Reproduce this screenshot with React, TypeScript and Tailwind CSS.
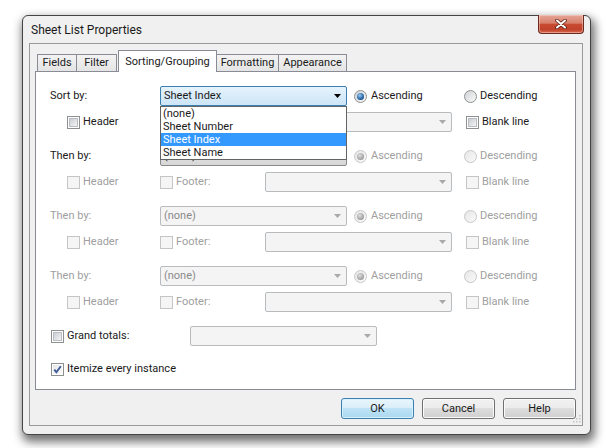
import React from 'react'

function Check({ checked = false, disabled = false }: { checked?: boolean; disabled?: boolean }) {
  if (disabled) {
    return <span className="h-[13px] w-[13px] shrink-0 border border-[#c5c5c5] bg-[#f5f5f5]" />
  }
  return (
    <span className="flex h-[13px] w-[13px] shrink-0 items-center justify-center border border-[#8e8f8f] bg-white">
      <span
        className={
          checked
            ? 'flex h-[9px] w-[9px] items-center justify-center bg-[linear-gradient(135deg,#e4e7eb,#fbfbfb)]'
            : 'h-[9px] w-[9px] border border-[#b9bdc3] bg-[linear-gradient(135deg,#c9cdd3,#f4f4f4)]'
        }
      >
        {checked && (
          <svg width="9" height="9" viewBox="0 0 9 9">
            <path d="M1.3 4.6 L3.4 7.2 L7.8 1.2" fill="none" stroke="#3d5a96" strokeWidth="1.9" />
          </svg>
        )}
      </span>
    </span>
  )
}

function Radio({ selected = false, disabled = false }: { selected?: boolean; disabled?: boolean }) {
  const ring = disabled
    ? 'flex h-[13px] w-[13px] shrink-0 items-center justify-center rounded-full border border-[#c7c7c7] bg-[linear-gradient(135deg,#e6e6e6,#fafafa)]'
    : 'flex h-[13px] w-[13px] shrink-0 items-center justify-center rounded-full border border-[#8e8f8f] bg-[linear-gradient(135deg,#cfd2d6,#fafafa)]'
  return (
    <span className={ring}>
      {selected && (
        <span
          className={
            disabled
              ? 'h-[7px] w-[7px] rounded-full bg-[radial-gradient(circle_at_40%_35%,#e0e0e0,#a5a5a5_60%,#8c8c8c)]'
              : 'h-[7px] w-[7px] rounded-full bg-[radial-gradient(circle_at_40%_35%,#9ccbf2,#2a6aa8_55%,#0d2b52)]'
          }
        />
      )}
    </span>
  )
}

function Arrow({ disabled = false }: { disabled?: boolean }) {
  return (
    <svg width="7" height="4" viewBox="0 0 7 4" className="shrink-0">
      <polygon points="0,0 7,0 3.5,4" fill={disabled ? '#a9a9a9' : '#000'} />
    </svg>
  )
}

function Combo({
  width,
  text,
  kind,
  children,
}: {
  width: string
  text?: string
  kind: 'active' | 'plain' | 'disabled'
  children?: React.ReactNode
}) {
  const look =
    kind === 'active'
      ? 'border-[#3c7fb1] bg-[linear-gradient(#e6f3fc,#cce5f7)]'
      : kind === 'plain'
        ? 'border-[#8a8a8a] bg-[linear-gradient(#f3f3f3,#ececec_50%,#e0e0e0_50%,#d6d6d6)]'
        : 'border-[#b8bcbf] bg-[#f4f4f4]'
  return (
    <div className={`relative ${width}`}>
      <div className={`flex h-[20px] items-center justify-between rounded-[2px] border pl-[3px] pr-[5px] ${look}`}>
        <span className={kind === 'disabled' ? 'text-[#8a8a8a]' : ''}>{text}</span>
        <Arrow disabled={kind === 'disabled'} />
      </div>
      {children}
    </div>
  )
}

function SortSection({ first = false, labelOn = false }: { first?: boolean; labelOn?: boolean }) {
  const grey = 'text-[#a0a0a0]'
  return (
    <div className="mb-[14px]">
      <div className="flex h-[20px] items-center">
        <span className={`w-[110px] ${first || labelOn ? '' : grey}`}>{first ? 'Sort by:' : 'Then by:'}</span>
        {first ? (
          <Combo width="w-[187px]" text="Sheet Index" kind="active">
            <div className="absolute left-0 top-full z-20 w-full border border-[#646464] bg-white">
              {['(none)', 'Sheet Number', 'Sheet Index', 'Sheet Name'].map((item) => (
                <div
                  key={item}
                  className={
                    item === 'Sheet Index'
                      ? 'h-[13px] bg-[#3399ff] pl-[2px] leading-[13px] text-white'
                      : 'h-[13px] pl-[2px] leading-[13px]'
                  }
                >
                  {item}
                </div>
              ))}
            </div>
          </Combo>
        ) : (
          <Combo width="w-[187px]" text="(none)" kind={labelOn ? 'plain' : 'disabled'} />
        )}
        <div className="ml-[7px] flex w-[110px] items-center gap-[4px]">
          <Radio selected disabled={!first} />
          <span className={first ? '' : grey}>Ascending</span>
        </div>
        <div className="flex items-center gap-[3px]">
          <Radio disabled={!first} />
          <span className={first ? '' : grey}>Descending</span>
        </div>
      </div>
      <div className="mt-[6px] flex h-[20px] items-center">
        <div className="ml-[17px] flex w-[93px] items-center gap-[3px]">
          <Check disabled={!first} />
          <span className={first ? '' : grey}>Header</span>
        </div>
        <div className="flex w-[105px] items-center gap-[3px]">
          <Check disabled={!first} />
          <span className={first ? '' : grey}>Footer:</span>
        </div>
        <Combo width="w-[187px]" kind="disabled" />
        <div className="ml-[14px] flex items-center gap-[3px]">
          <Check disabled={!first} />
          <span className={first ? '' : grey}>Blank line</span>
        </div>
      </div>
    </div>
  )
}

function Button({ label, primary = false }: { label: string; primary?: boolean }) {
  return (
    <div
      className={
        primary
          ? 'flex h-[21px] w-[73px] items-center justify-center rounded-[3px] border border-[#3c7fb1] bg-[linear-gradient(#e9f5fc,#d9eef9_50%,#bfe3f6_50%,#aad8f1)] pt-px shadow-[inset_0_0_0_1px_#d8f1fd]'
          : 'flex h-[21px] w-[73px] items-center justify-center rounded-[3px] border border-[#707070] bg-[linear-gradient(#f2f2f2,#ebebeb_50%,#dddddd_50%,#cfcfcf)] pt-px shadow-[inset_0_0_0_1px_#fbfbfb]'
      }
    >
      {label}
    </div>
  )
}

const tabs = [
  { label: 'Fields', cls: 'w-[40px]' },
  { label: 'Filter', cls: 'w-[41px] -ml-px' },
  { label: 'Sorting/Grouping', cls: 'w-[99px] ml-[1px]', active: true },
  { label: 'Formatting', cls: 'w-[63px] -ml-px' },
  { label: 'Appearance', cls: 'w-[69px] -ml-px' },
]

export default function App() {
  return (
    <div className="h-[448px] w-[613px] overflow-hidden bg-white pl-[22px] pt-[15px] font-['Segoe_UI',Roboto,sans-serif] text-[11px] text-[#1a1a1a]">
      <div className="flex h-[420px] w-[569px] flex-col rounded-[6px] border border-[#454545] bg-[#f0f0f0] shadow-[2px_5px_10px_2px_rgba(0,0,0,0.55)]">
        <div className="flex h-[27px] shrink-0 items-start justify-between">
          <span className="pl-[8px] pt-[7px] text-[12px] leading-[15px]">Sheet List Properties</span>
          <div className="-mt-px mr-[6px] flex h-[19px] w-[46px] items-center justify-center rounded-b-[4px] border border-t-0 border-[#6b2a1f] bg-[linear-gradient(#e7a797,#d7806c_45%,#c74a31_52%,#c0422a_80%,#d86a4f)] shadow-[inset_0_0_0_1px_rgba(255,220,210,0.45)]">
            <svg width="12" height="10" viewBox="0 0 12 10">
              <path d="M2 1.5 L10 8.5 M10 1.5 L2 8.5" stroke="#5a1e14" strokeWidth="3.6" strokeLinecap="round" />
              <path d="M2 1.5 L10 8.5 M10 1.5 L2 8.5" stroke="#ffffff" strokeWidth="2" strokeLinecap="round" />
            </svg>
          </div>
        </div>

        <div className="relative ml-[6px] flex h-[383px] w-[554px] flex-col border border-[#999a9c]">
          <div className="ml-[5px] mt-[6px] w-[541px]">
            <div className="flex h-[21px] items-end pl-[2px]">
              {tabs.map((t) =>
                t.active ? (
                  <div
                    key={t.label}
                    className={`relative z-10 -mb-px flex h-[22px] items-start justify-center border border-b-0 border-[#898c95] bg-white pt-[3px] ${t.cls}`}
                  >
                    {t.label}
                  </div>
                ) : (
                  <div
                    key={t.label}
                    className={`flex h-[17px] items-center justify-center border border-b-0 border-[#898c95] bg-[linear-gradient(#f3f3f3,#e4e4e4)] pt-px ${t.cls}`}
                  >
                    {t.label}
                  </div>
                ),
              )}
            </div>
            <div className="h-[319px] border border-[#898c95] bg-white pl-[14px] pt-[14px]">
              <SortSection first />
              <SortSection labelOn />
              <SortSection />
              <SortSection />
              <div className="mt-[3px] flex h-[20px] items-center">
                <div className="ml-px flex w-[139px] items-center gap-[3px]">
                  <Check />
                  <span>Grand totals:</span>
                </div>
                <Combo width="w-[187px]" kind="disabled" />
              </div>
              <div className="ml-px mt-[17px] flex h-[13px] items-center gap-[3px]">
                <Check checked />
                <span>Itemize every instance</span>
              </div>
            </div>
            <div className="mt-[8px] flex justify-end gap-[8px]">
              <Button label="OK" primary />
              <Button label="Cancel" />
              <Button label="Help" />
            </div>
          </div>
          <svg width="8" height="8" viewBox="0 0 8 8" className="absolute bottom-[2px] right-[1px]">
            <rect x="6" y="0" width="1.5" height="1.5" fill="#c4c4c4" />
            <rect x="3" y="3" width="1.5" height="1.5" fill="#c4c4c4" />
            <rect x="6" y="3" width="1.5" height="1.5" fill="#c4c4c4" />
            <rect x="0" y="6" width="1.5" height="1.5" fill="#c4c4c4" />
            <rect x="3" y="6" width="1.5" height="1.5" fill="#c4c4c4" />
            <rect x="6" y="6" width="1.5" height="1.5" fill="#c4c4c4" />
          </svg>
        </div>
      </div>
    </div>
  )
}
